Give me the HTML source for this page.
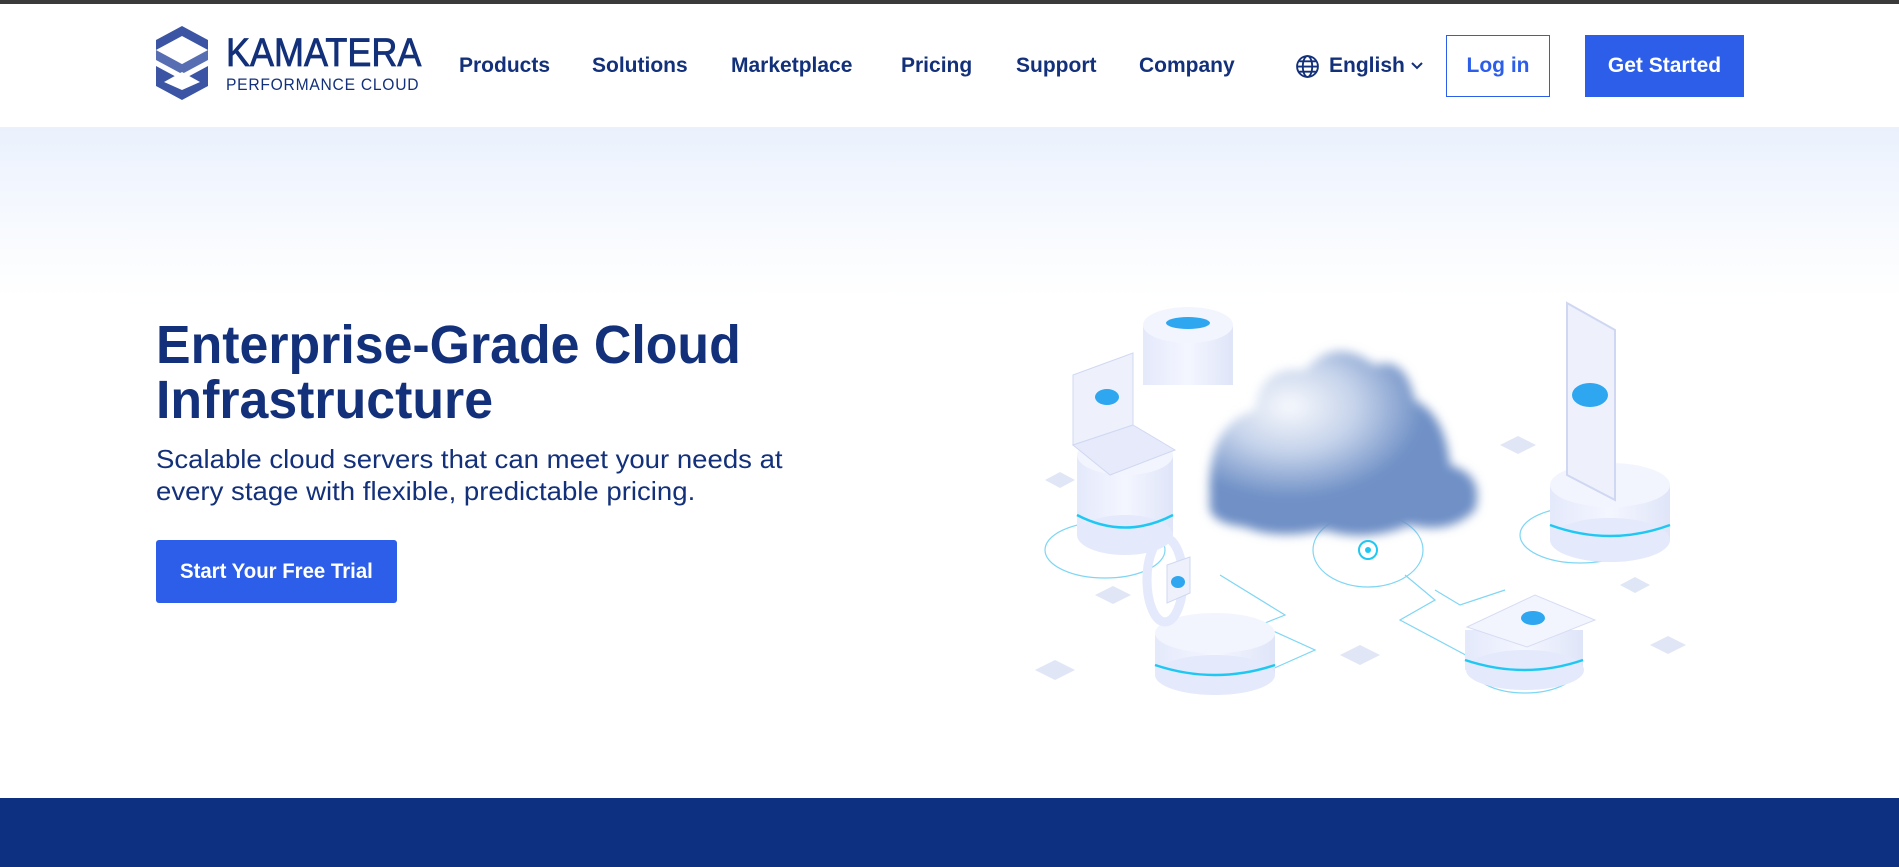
<!DOCTYPE html>
<html><head><meta charset="utf-8"><style>
*{margin:0;padding:0;box-sizing:border-box}
body{width:1899px;height:867px;overflow:hidden;font-family:"Liberation Sans",sans-serif;background:#fff;position:relative}
.top{position:absolute;left:0;top:0;width:1899px;height:4px;background:#3a3a3a}
header{position:absolute;top:4px;left:0;width:1899px;height:123px;background:#fff}
.hero{position:absolute;top:127px;left:0;width:1899px;height:671px;background:linear-gradient(#eaf1fd 0,#f6f9fe 90px,#fff 170px)}
.foot{position:absolute;top:798px;left:0;width:1899px;height:69px;background:#0d3180}
.t{position:absolute;white-space:nowrap;transform-origin:left top}
.nav{font-weight:bold;font-size:21px;color:#13307a;top:54px}
.btn{position:absolute;display:flex;align-items:center;justify-content:center;font-weight:bold;font-size:21px}
</style></head><body>
<div class="top"></div>
<header></header>
<svg style="position:absolute;left:154px;top:26px" width="56" height="74" viewBox="0 0 56 74">
<g fill="#3b55a4">
<path d="M28 0 L54 14 L54 24 L28 10 L2 24 L2 14Z"/>
<path d="M2 24 L28 38 L54 24 L54 34 L28 48 L2 34Z" opacity=".85"/>
<path d="M28 18 L46 28 L28 38 L10 28Z" fill="#fff"/>
<path d="M2 40 L28 54 L54 40 L54 60 L28 74 L2 60Z"/>
<path d="M28 46 L46 56 L28 64 L10 56Z" fill="#fff"/>
</g></svg>
<div class="t" style="left:226px;top:31px;font-size:40px;color:#13307a;transform:scaleX(.9);-webkit-text-stroke:.8px #13307a">KAMATERA</div>
<div class="t" style="left:226px;top:75px;font-size:17px;color:#13307a;transform:scaleX(.92);letter-spacing:.8px">PERFORMANCE CLOUD</div>
<div class="t nav" style="left:459px">Products</div>
<div class="t nav" style="left:592px">Solutions</div>
<div class="t nav" style="left:731px">Marketplace</div>
<div class="t nav" style="left:901px">Pricing</div>
<div class="t nav" style="left:1016px">Support</div>
<div class="t nav" style="left:1139px">Company</div>
<svg style="position:absolute;left:1295px;top:54px" width="25" height="25" viewBox="0 0 24 24" fill="none" stroke="#13307a" stroke-width="1.8"><circle cx="12" cy="12" r="10"/><ellipse cx="12" cy="12" rx="4.5" ry="10"/><path d="M2 12h20M4 7h16M4 17h16"/></svg>
<div class="t nav" style="left:1329px">English</div>
<svg style="position:absolute;left:1411px;top:61px" width="12" height="10" viewBox="0 0 12 10" fill="none" stroke="#13307a" stroke-width="2"><path d="M1 2l5 5 5-5"/></svg>
<div class="btn" style="left:1446px;top:35px;width:104px;height:62px;border:1.5px solid #2c5eea;color:#2c5eea">Log in</div>
<div class="btn" style="left:1585px;top:35px;width:159px;height:62px;background:#2c5eea;color:#fff">Get Started</div>
<div class="hero"></div>
<div class="t" style="left:156px;top:318px;font-size:54px;font-weight:bold;color:#13307a;line-height:55px;transform:scaleX(.96)">Enterprise-Grade Cloud<br>Infrastructure</div>
<div class="t" style="left:156px;top:443px;font-size:26px;color:#13307a;line-height:32px;transform:scaleX(1.06)">Scalable cloud servers that can meet your needs at<br>every stage with flexible, predictable pricing.</div>
<div class="btn" style="left:156px;top:540px;width:241px;height:63px;background:#2c5eea;color:#fff;border-radius:3px"><span style="display:inline-block;transform:scaleX(.97)">Start Your Free Trial</span></div>
<svg style="position:absolute;left:1005px;top:275px" width="700" height="450" viewBox="0 0 700 450">
<defs>
<linearGradient id="cy" x1="0" x2="1"><stop offset="0" stop-color="#e4e9fb"/><stop offset=".5" stop-color="#f4f6ff"/><stop offset="1" stop-color="#dfe5f8"/></linearGradient>
<radialGradient id="cl" cx=".3" cy=".3"><stop offset="0" stop-color="#f7f9fd"/><stop offset=".5" stop-color="#c4d2ea"/><stop offset="1" stop-color="#6f90c6"/></radialGradient>
<filter id="bl"><feGaussianBlur stdDeviation="5"/></filter>
</defs>
<g fill="none" stroke="#7fd6f4" stroke-width="1.2">
<ellipse cx="100" cy="275" rx="60" ry="28"/><ellipse cx="575" cy="260" rx="60" ry="28"/>
<ellipse cx="363" cy="275" rx="55" ry="37"/><ellipse cx="210" cy="390" rx="55" ry="28"/><ellipse cx="520" cy="390" rx="55" ry="28"/>
<path d="M215 300 L280 340 L255 350 L310 375 L265 395 M400 300 L430 325 L395 345 L470 385 M430 315 L455 330 L500 315"/>
</g>
<g fill="#d8e0f4" opacity=".8">
<path d="M40 205l15 -8 15 8 -15 8z"/><path d="M90 320l18 -9 18 9 -18 9z"/><path d="M30 395l20 -10 20 10 -20 10z"/>
<path d="M335 380l20 -10 20 10 -20 10z"/><path d="M495 170l18 -9 18 9 -18 9z"/><path d="M615 310l15 -8 15 8 -15 8z"/><path d="M645 370l18 -9 18 9 -18 9z"/>
</g>
<g>
<rect x="72" y="180" width="96" height="80" fill="url(#cy)"/><ellipse cx="120" cy="260" rx="48" ry="20" fill="#e4e9fb"/><ellipse cx="120" cy="180" rx="48" ry="20" fill="#f3f5fe"/>
<path d="M72 240 Q120 265 168 240" stroke="#1ec8f2" stroke-width="2.5" fill="none"/>
<path d="M68 100 L128 78 L128 150 L68 170Z" fill="#eef1fc" stroke="#d0d8f2"/><path d="M68 170 L128 150 L170 175 L105 200Z" fill="#e6eafa" stroke="#d0d8f2"/>
<ellipse cx="102" cy="122" rx="12" ry="8" fill="#2ea6f0"/>
<rect x="138" y="50" width="90" height="60" fill="url(#cy)"/><ellipse cx="183" cy="50" rx="45" ry="18" fill="#f3f5fe"/>
<ellipse cx="183" cy="48" rx="22" ry="6" fill="#2ea6f0"/>
<rect x="545" y="210" width="120" height="55" fill="url(#cy)"/><ellipse cx="605" cy="265" rx="60" ry="22" fill="#e4e9fb"/><ellipse cx="605" cy="210" rx="60" ry="22" fill="#f3f5fe"/>
<path d="M545 250 Q605 272 665 250" stroke="#1ec8f2" stroke-width="2.5" fill="none"/>
<path d="M562 28 L610 55 L610 225 L562 200Z" fill="#eef1fc" stroke="#cfd7f2" stroke-width="2"/>
<ellipse cx="585" cy="120" rx="18" ry="12" fill="#2ea6f0"/>
<rect x="150" y="360" width="120" height="40" fill="url(#cy)"/><ellipse cx="210" cy="400" rx="60" ry="20" fill="#e4e9fb"/><ellipse cx="210" cy="358" rx="60" ry="20" fill="#f3f5fe"/>
<path d="M150 390 Q210 410 270 390" stroke="#1ec8f2" stroke-width="2.5" fill="none"/>
<ellipse cx="160" cy="305" rx="18" ry="42" fill="none" stroke="#e4e9fb" stroke-width="9"/>
<path d="M162 290 L185 282 L185 318 L162 328Z" fill="#eef1fc" stroke="#d0d8f2"/><ellipse cx="173" cy="307" rx="7" ry="6" fill="#2ea6f0"/>
<rect x="460" y="355" width="118" height="40" fill="url(#cy)"/><ellipse cx="520" cy="395" rx="59" ry="20" fill="#e4e9fb"/>
<path d="M460 385 Q520 405 578 385" stroke="#1ec8f2" stroke-width="2.5" fill="none"/>
<path d="M462 352 L530 320 L590 345 L522 372Z" fill="#f3f5fe" stroke="#d6ddf3"/><ellipse cx="528" cy="343" rx="12" ry="7" fill="#2ea6f0"/>
<g filter="url(#bl)"><path d="M205 225 Q200 150 250 135 Q255 90 300 95 Q330 60 370 90 Q400 80 410 125 Q440 140 445 190 Q480 200 470 235 Q445 260 405 250 Q360 268 320 255 Q270 265 240 252 Q200 248 205 225Z" fill="url(#cl)"/></g>
<circle cx="363" cy="275" r="9" fill="none" stroke="#1ec8f2" stroke-width="2"/><circle cx="363" cy="275" r="3" fill="#1ec8f2"/>
</g>
</svg>
<div class="foot"></div>
</body></html>
